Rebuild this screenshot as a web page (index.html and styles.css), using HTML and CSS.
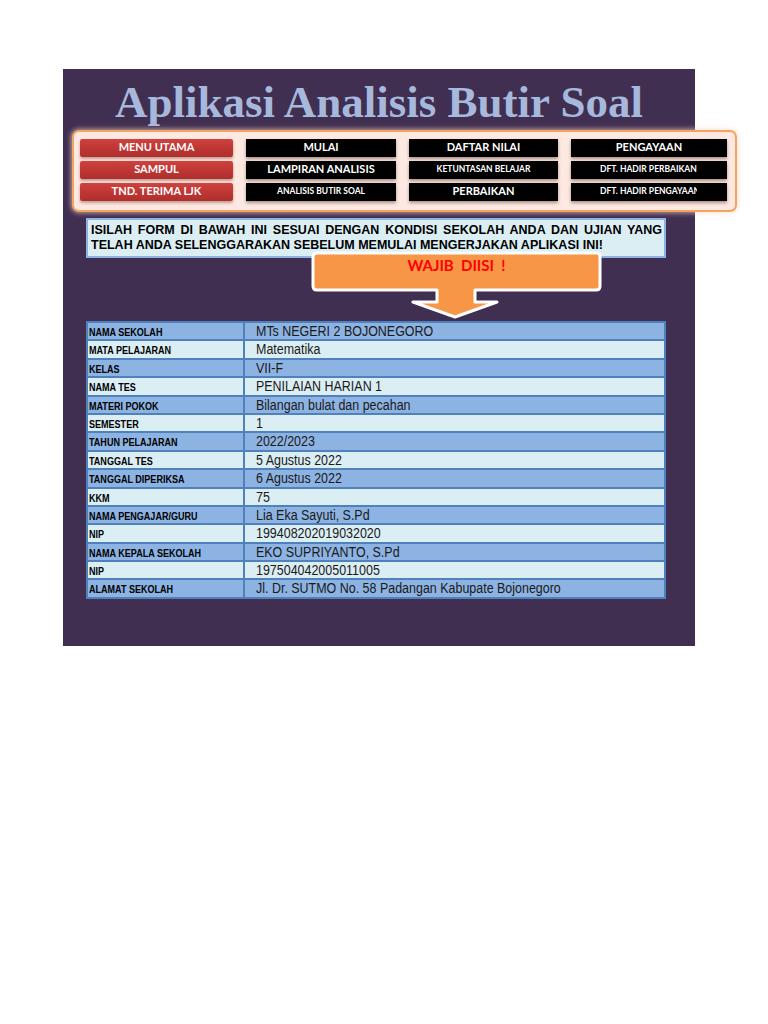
FILE: index.html
```html
<!DOCTYPE html>
<html lang="id">
<head>
<meta charset="utf-8">
<title>Aplikasi Analisis Butir Soal</title>
<link rel="stylesheet" href="styles.css">
</head>
<body>
<div class="panel">
  <h1 class="title">Aplikasi Analisis Butir Soal</h1>
  <div class="menu">
    <div class="btn red">MENU UTAMA</div>
    <div class="btn blk">MULAI</div>
    <div class="btn blk">DAFTAR NILAI</div>
    <div class="btn blk">PENGAYAAN</div>
    <div class="btn red">SAMPUL</div>
    <div class="btn blk">LAMPIRAN ANALISIS</div>
    <div class="btn blk sm">KETUNTASAN BELAJAR</div>
    <div class="btn blk sm clip"><span>DFT. HADIR PERBAIKAN</span></div>
    <div class="btn red">TND. TERIMA LJK</div>
    <div class="btn blk sm">ANALISIS BUTIR SOAL</div>
    <div class="btn blk">PERBAIKAN</div>
    <div class="btn blk sm clip"><span>DFT. HADIR PENGAYAAN</span></div>
  </div>
  <p class="note"><span class="l1">ISILAH FORM DI BAWAH INI SESUAI DENGAN KONDISI SEKOLAH ANDA DAN UJIAN YANG</span><span class="l2">TELAH ANDA SELENGGARAKAN SEBELUM MEMULAI MENGERJAKAN APLIKASI INI!</span></p>
  <div class="callout">
    <svg class="arrow" width="294" height="72" viewBox="0 0 294 72">
      <path d="M7,3 H287 Q290,3 290,7 V36 Q290,40 286,40 H165 V52 H187 L145,67 L103,52 H127 V40 H7 Q3,40 3,36 V7 Q3,3 7,3 Z" fill="#f79646" stroke="#ffffff" stroke-width="3" stroke-linejoin="round"/>
    </svg>
    <span class="wajib">WAJIB  DIISI  !</span>
  </div>
  <div class="form">
    <div class="lbl b"><span>NAMA SEKOLAH</span></div><div class="val b"><span>MTs NEGERI 2 BOJONEGORO</span></div>
    <div class="lbl l"><span>MATA PELAJARAN</span></div><div class="val l"><span>Matematika</span></div>
    <div class="lbl b"><span>KELAS</span></div><div class="val b"><span>VII-F</span></div>
    <div class="lbl l"><span>NAMA TES</span></div><div class="val l"><span>PENILAIAN HARIAN 1</span></div>
    <div class="lbl b"><span>MATERI POKOK</span></div><div class="val b"><span>Bilangan bulat dan pecahan</span></div>
    <div class="lbl l"><span>SEMESTER</span></div><div class="val l"><span>1</span></div>
    <div class="lbl b"><span>TAHUN PELAJARAN</span></div><div class="val b"><span>2022/2023</span></div>
    <div class="lbl l"><span>TANGGAL TES</span></div><div class="val l"><span>5 Agustus 2022</span></div>
    <div class="lbl b"><span>TANGGAL DIPERIKSA</span></div><div class="val b"><span>6 Agustus 2022</span></div>
    <div class="lbl l"><span>KKM</span></div><div class="val l"><span>75</span></div>
    <div class="lbl b"><span>NAMA PENGAJAR/GURU</span></div><div class="val b"><span>Lia Eka Sayuti, S.Pd</span></div>
    <div class="lbl l"><span>NIP</span></div><div class="val l"><span>199408202019032020</span></div>
    <div class="lbl b"><span>NAMA KEPALA SEKOLAH</span></div><div class="val b"><span>EKO SUPRIYANTO, S.Pd</span></div>
    <div class="lbl l"><span>NIP</span></div><div class="val l"><span>197504042005011005</span></div>
    <div class="lbl b"><span>ALAMAT SEKOLAH</span></div><div class="val b"><span>Jl. Dr. SUTMO No. 58 Padangan Kabupate Bojonegoro</span></div>
  </div>
</div>
</body>
</html>
```

FILE: styles.css
```css
html, body {
  margin: 0;
  padding: 0;
  background: #ffffff;
}
body {
  font-family: "Liberation Sans", Arial, sans-serif;
}
.panel {
  margin: 69px 0 0 63px;
  width: 632px;
  height: 577px;
  background: #412f51;
  overflow: visible;
}
.title {
  margin: 0;
  box-sizing: border-box;
  height: 61px;
  padding-top: 5px;
  line-height: 56px;
  text-align: center;
  font-family: "Liberation Serif", "Times New Roman", serif;
  font-weight: bold;
  font-size: 45px;
  color: #a6b8dc;
  white-space: nowrap;
}
.menu {
  margin-left: 9px;
  width: 665px;
  height: 82px;
  box-sizing: border-box;
  border: 2px solid #f5a460;
  border-radius: 7px;
  background: #fde9e1;
  box-shadow: 0 0 5px 1px rgba(253, 214, 200, 0.7);
  padding: 7px 0 0 6px;
  display: grid;
  grid-template-columns: 153px 150px 149px 156px;
  grid-auto-rows: 18px;
  column-gap: 13px;
  row-gap: 4px;
}
.btn {
  font-family: Lato, "Open Sans", sans-serif;
  font-weight: bold;
  font-size: 11px;
  line-height: 16px;
  color: #ffffff;
  text-align: center;
  white-space: nowrap;
  overflow: hidden;
}
.btn.red {
  background: linear-gradient(#cf423e, #bd3633 55%, #ae2f2d);
  border-radius: 2px;
  box-shadow: 0 2px 3px rgba(120, 60, 50, 0.45);
}
.btn.blk {
  background: #000000;
  box-shadow: 0 2px 3px rgba(90, 60, 50, 0.5);
}
.btn.sm {
  font-size: 8.5px;
}
.btn.clip {
  text-align: left;
  padding-left: 29px;
}
.btn.clip span {
  display: inline-block;
  width: 97px;
  overflow: hidden;
  vertical-align: top;
}
.note {
  margin: 6px 0 0 23px;
  width: 580px;
  box-sizing: border-box;
  border: 2px solid #8db3e2;
  background: #dbeef4;
  padding: 3px 2px 3px 3px;
  font-weight: bold;
  font-size: 12.5px;
  line-height: 15px;
  color: #000000;
}
.note .l1 {
  display: block;
  white-space: nowrap;
  text-align: justify;
  text-align-last: justify;
}
.note .l2 {
  display: block;
  white-space: nowrap;
}
.callout {
  position: relative;
  height: 63px;
}
.arrow {
  position: absolute;
  left: 247px;
  top: -8px;
}
.wajib {
  position: absolute;
  left: 250px;
  top: -1px;
  width: 287px;
  text-align: center;
  white-space: pre;
  font-family: Lato, "Open Sans", sans-serif;
  font-weight: bold;
  font-size: 15px;
  line-height: 17px;
  color: #ff0000;
}
.form {
  margin-left: 23px;
  width: 580px;
  box-sizing: border-box;
  background: #4f81bd;
  padding: 2px;
  display: grid;
  grid-template-columns: 155px 1fr;
  grid-auto-rows: 16.4px;
  gap: 2px;
}
.form .b {
  background: #8db3e2;
}
.form .l {
  background: #dbeef4;
}
.lbl {
  font-weight: bold;
  font-size: 10.5px;
  line-height: 10px;
  padding: 4px 0 0 1px;
  color: #000000;
  white-space: nowrap;
  overflow: hidden;
}
.lbl span {
  display: inline-block;
  transform: scaleX(0.86);
  transform-origin: 0 50%;
}
.val {
  font-size: 14px;
  line-height: 16px;
  padding: 0 0 0 11px;
  color: #1a1a1a;
  white-space: nowrap;
  overflow: hidden;
}
.val span {
  display: inline-block;
  transform: scaleX(0.89);
  transform-origin: 0 50%;
}
```
